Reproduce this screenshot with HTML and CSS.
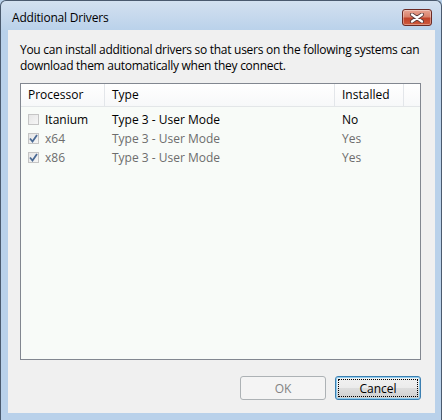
FILE: index.html
```html
<!DOCTYPE html>
<html>
<head>
<meta charset="utf-8">
<link rel="stylesheet" href="styles.css">
</head>
<body>
<div class="window">
  <div class="titlebar">
    <span class="title">Additional Drivers</span>
    <button class="close" aria-label="Close">
      <svg width="16" height="10" viewBox="0 0 16 10">
        <path d="M3 1.5 L13 8.5 M13 1.5 L3 8.5" stroke="#5a3a3a" stroke-width="4" stroke-linecap="round" fill="none"/>
        <path d="M3 1.5 L13 8.5 M13 1.5 L3 8.5" stroke="#ffffff" stroke-width="2.2" stroke-linecap="round" fill="none"/>
      </svg>
    </button>
  </div>
  <div class="client">
    <p class="intro">You can install additional drivers so that users on the following systems can download them automatically when they connect.</p>
    <div class="listbox">
      <div class="header">
        <div class="hcell c1">Processor</div>
        <div class="hcell c2">Type</div>
        <div class="hcell c3">Installed</div>
        <div class="hcell c4"></div>
      </div>
      <div class="row">
        <div class="cell c1"><span class="check"></span>Itanium</div>
        <div class="cell c2">Type 3 - User Mode</div>
        <div class="cell c3">No</div>
      </div>
      <div class="row disabled">
        <div class="cell c1"><span class="check checked"><svg width="9" height="9" viewBox="0 0 9 9"><path d="M1 4.5 L3.5 7.5 L8 1" stroke="#4a6a94" stroke-width="1.8" fill="none"/></svg></span>x64</div>
        <div class="cell c2">Type 3 - User Mode</div>
        <div class="cell c3">Yes</div>
      </div>
      <div class="row disabled">
        <div class="cell c1"><span class="check checked"><svg width="9" height="9" viewBox="0 0 9 9"><path d="M1 4.5 L3.5 7.5 L8 1" stroke="#4a6a94" stroke-width="1.8" fill="none"/></svg></span>x86</div>
        <div class="cell c2">Type 3 - User Mode</div>
        <div class="cell c3">Yes</div>
      </div>
    </div>
    <div class="buttons">
      <button class="btn" disabled>OK</button>
      <button class="btn default"><span class="focus">Cancel</span></button>
    </div>
  </div>
</div>
</body>
</html>
```
FILE: styles.css
```css
html, body {
  margin: 0;
  padding: 0;
  background: #b9d1ea;
}
body {
  font-family: "Open Sans", "Noto Sans", sans-serif;
  font-size: 12px;
  color: #000;
}
.window {
  width: 442px;
  height: 420px;
  box-sizing: border-box;
  border: 1px solid #4a5a6e;
  border-bottom: none;
  border-radius: 6px 6px 0 0;
  background: linear-gradient(#d3e1f0 0px, #c2d6ec 20px, #b9d1ea 30px, #b9d1ea 100%);
  display: flex;
  flex-direction: column;
  overflow: hidden;
}
.titlebar {
  height: 29px;
  box-sizing: border-box;
  display: flex;
  align-items: center;
  padding: 4px 9px 0 11px;
  flex-shrink: 0;
}
.title {
  flex: 1;
  font-size: 12px;
  letter-spacing: -0.2px;
  color: #000;
}
.close {
  width: 30px;
  height: 17px;
  padding: 0;
  border: 1px solid #6b2a24;
  border-radius: 3px;
  background: linear-gradient(#e8a493 0%, #d9826c 45%, #c1432a 55%, #cf5a3c 100%);
  box-shadow: inset 0 0 0 1px rgba(255,255,255,0.35);
  display: flex;
  align-items: center;
  justify-content: center;
}
.client {
  flex: 1;
  margin: 0 6px 7px 7px;
  background: #f0f0f0;
  display: flex;
  flex-direction: column;
  padding: 12px 11px 0 12px;
}
.intro {
  margin: 0;
  line-height: 16px;
  letter-spacing: -0.28px;
  width: 405px;
}
.listbox {
  margin-top: 9px;
  height: 277px;
  border: 1px solid #828790;
  background: #f8fbf8;
  width: 401px;
  box-sizing: border-box;
}
.header {
  display: flex;
  height: 22px;
  border-bottom: 1px solid #e3e6e8;
  background: linear-gradient(#ffffff, #f7f8f9);
  margin-bottom: 3px;
}
.hcell {
  box-sizing: border-box;
  padding-left: 7px;
  line-height: 21px;
  border-right: 1px solid #e3e6ea;
}
.c1 { width: 84px; flex-shrink: 0; }
.c2 { width: 230px; flex-shrink: 0; }
.c3 { width: 69px; flex-shrink: 0; }
.c4 { flex: 1; border-right: none; }
.row {
  display: flex;
  height: 19px;
  align-items: center;
}
.cell {
  box-sizing: border-box;
  padding-left: 7px;
  white-space: nowrap;
  display: flex;
  align-items: center;
}
.row.disabled { color: #6d6d6d; }
.check {
  width: 9px;
  height: 9px;
  border: 1px solid #c5c5c5;
  background: linear-gradient(135deg, #e6e6e6, #f6f6f6);
  margin-right: 6px;
  display: inline-flex;
  align-items: center;
  justify-content: center;
  flex-shrink: 0;
}
.check svg { display: block; }
.buttons {
  display: flex;
  justify-content: flex-end;
  gap: 9px;
  margin-top: 16px;
  padding-right: 1px;
  width: 401px;
}
.btn {
  width: 86px;
  height: 24px;
  font-family: inherit;
  font-size: 12px;
  padding: 0;
  border-radius: 3px;
  border: 1px solid #707070;
  background: linear-gradient(#f2f2f2 0%, #ebebeb 50%, #dddddd 51%, #cfcfcf 100%);
  color: #000;
}
.btn:disabled {
  border-color: #adb2b5;
  background: #f4f4f4;
  color: #838383;
}
.btn.default {
  border-color: #3c7fb1;
  box-shadow: inset 0 0 0 1px #8fcdf0;
  padding: 2px;
}
.focus {
  display: flex;
  align-items: center;
  justify-content: center;
  height: 100%;
  box-sizing: border-box;
  border: 1px dotted #000;
}
```
